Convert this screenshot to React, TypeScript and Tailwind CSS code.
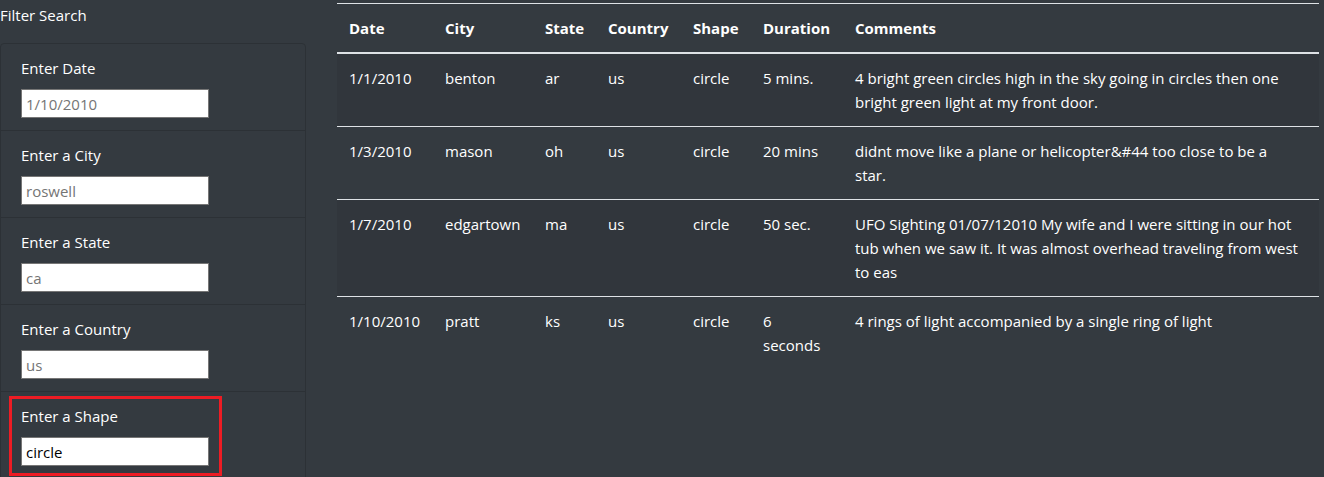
const fields = [
  { label: "Enter Date", placeholder: "1/10/2010" },
  { label: "Enter a City", placeholder: "roswell" },
  { label: "Enter a State", placeholder: "ca" },
  { label: "Enter a Country", placeholder: "us" },
];

const rows = [
  ["1/1/2010", "benton", "ar", "us", "circle", "5 mins.", "4 bright green circles high in the sky going in circles then one bright green light at my front door."],
  ["1/3/2010", "mason", "oh", "us", "circle", "20 mins", "didnt move like a plane or helicopter&#44 too close to be a star."],
  ["1/7/2010", "edgartown", "ma", "us", "circle", "50 sec.", "UFO Sighting 01/07/12010 My wife and I were sitting in our hot tub when we saw it. It was almost overhead traveling from west to eas"],
  ["1/10/2010", "pratt", "ks", "us", "circle", "6 seconds", "4 rings of light accompanied by a single ring of light"],
];

const headers = ["Date", "City", "State", "Country", "Shape", "Duration", "Comments"];

function App() {
  return (
    <div
      className="flex h-[477px] w-full overflow-hidden bg-[#343a40] text-[15px] leading-6 text-white"
      style={{ fontFamily: '"Segoe UI", "Open Sans", "Noto Sans", sans-serif' }}
    >
      <div className="w-[306px] shrink-0 pt-[3px]">
        <p>Filter Search</p>
        <ul className="mt-4 rounded-t border border-[#2c3136]">
          {fields.map((f) => (
            <li key={f.label} className="border-b border-[#2c3136] px-5 pt-3 pb-3">
              <p>{f.label}</p>
              <input
                className="mt-[9px] h-[29px] w-[188px] border border-[#767676] bg-white px-1 text-[#757575] placeholder:text-[#757575]"
                placeholder={f.placeholder}
              />
            </li>
          ))}
          <li className="relative px-5 pt-3 pb-3">
            <div className="pointer-events-none absolute top-[4px] left-[8px] h-[80px] w-[213px] border-[3px] border-[#ed1c24]" />
            <p>Enter a Shape</p>
            <input
              className="mt-[9px] h-[29px] w-[188px] border border-[#767676] bg-white px-1 text-black"
              defaultValue="circle"
            />
          </li>
        </ul>
      </div>
      <div className="ml-[31px] w-[982px] shrink-0 pt-[3px]">
        <table className="w-full table-fixed border-collapse">
          <colgroup>
            <col className="w-[96px]" />
            <col className="w-[100px]" />
            <col className="w-[63px]" />
            <col className="w-[85px]" />
            <col className="w-[70px]" />
            <col className="w-[92px]" />
            <col />
          </colgroup>
          <thead>
            <tr className="border-t border-b-2 border-[#dee2e6]">
              {headers.map((h) => (
                <th key={h} className="p-3 text-left font-bold">
                  {h}
                </th>
              ))}
            </tr>
          </thead>
          <tbody>
            {rows.map((r, i) => (
              <tr
                key={r[0]}
                className={
                  (i % 2 === 0 ? "bg-[#31363c] " : "") +
                  (i < rows.length - 1 ? "border-b border-[#dee2e6]" : "")
                }
              >
                {r.map((c, j) => (
                  <td key={j} className={j === 6 ? "py-3 pr-[19px] pl-3 align-top" : "p-3 align-top"}>
                    {c}
                  </td>
                ))}
              </tr>
            ))}
          </tbody>
        </table>
      </div>
    </div>
  );
}

export default App;
